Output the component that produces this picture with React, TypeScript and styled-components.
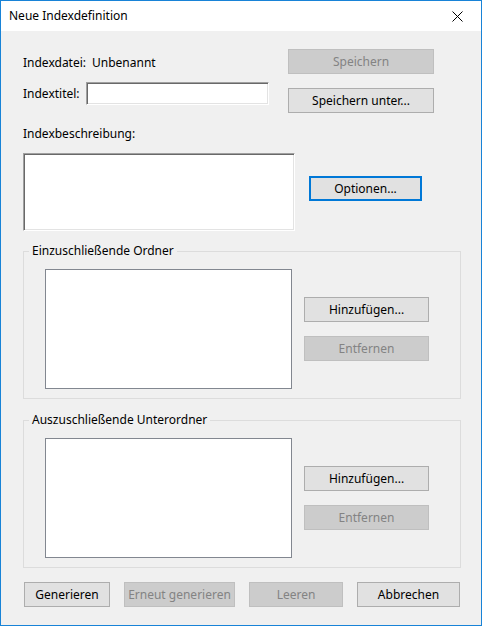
import React from "react";
import styled, { createGlobalStyle } from "styled-components";

const Global = createGlobalStyle`
  html, body { margin: 0; padding: 0; background: #ffffff; }
  * { box-sizing: border-box; }
  body {
    font-family: "Noto Sans", "Open Sans", sans-serif;
    font-size: 12px;
    color: #000;
  }
`;

const Window = styled.div`
  width: 482px;
  height: 626px;
  border: 1px solid #1883d7;
  background: #f0f0f0;
  display: flex;
  flex-direction: column;
`;

const TitleBar = styled.div`
  height: 30px;
  flex: none;
  background: #ffffff;
  display: flex;
  align-items: center;
  padding-left: 8px;
`;

const TitleText = styled.div`
  flex: 1;
  font-size: 12px;
  line-height: 16px;
  color: #000;
`;

const CloseButton = styled.div`
  width: 46px;
  height: 30px;
  display: flex;
  align-items: center;
  justify-content: center;
  padding-right: 2px;
`;

const Body = styled.div`
  flex: 1;
  padding: 18px 20px 0 22px;
  display: flex;
  flex-direction: column;
`;

const TopGrid = styled.div`
  display: grid;
  grid-template-columns: 63px 183px 165px;
  grid-template-rows: 25px 31px;
  row-gap: 8px;
`;

const InfoLine = styled.div`
  grid-column: 1 / 3;
  display: flex;
  align-items: center;
  padding-top: 2px;
  line-height: 16px;
`;

const InfoValue = styled.span`
  margin-left: 6px;
`;

const FieldLabel = styled.label`
  line-height: 23px;
  align-self: start;
  white-space: nowrap;
`;

const TextInput = styled.div`
  width: 183px;
  height: 23px;
  align-self: start;
  background: #fff;
  border: 1px solid;
  border-color: #a0a0a0 #ffffff #ffffff #a0a0a0;
  box-shadow: inset 1px 1px 0 #696969, inset -1px -1px 0 #e3e3e3;
`;

const Button = styled.div<{ $disabled?: boolean; $default?: boolean; $w: number }>`
  width: ${(p) => p.$w}px;
  height: 25px;
  display: flex;
  align-items: center;
  justify-content: center;
  line-height: 16px;
  background: ${(p) => (p.$disabled ? "#cccccc" : "#e1e1e1")};
  color: ${(p) => (p.$disabled ? "#838383" : "#000")};
  border: ${(p) =>
    p.$default ? "2px solid #0078d7" : p.$disabled ? "1px solid #bfbfbf" : "1px solid #adadad"};
  white-space: nowrap;
  flex: none;
`;

const TopButton = styled(Button)<{ $end?: boolean }>`
  align-self: ${(p) => (p.$end ? "end" : "start")};
  justify-self: end;
`;

const SectionLabel = styled.div`
  margin-top: 13px;
  line-height: 16px;
`;

const DescRow = styled.div`
  margin-top: 11px;
  display: flex;
  align-items: flex-start;
`;

const DescBox = styled.div`
  width: 272px;
  height: 78px;
  background: #fff;
  border: 1px solid;
  border-color: #a0a0a0 #ffffff #ffffff #a0a0a0;
  box-shadow: inset 1px 1px 0 #696969, inset -1px -1px 0 #e3e3e3;
`;

const OptionsButton = styled(Button)`
  margin-left: 14px;
  margin-top: 23px;
`;

const Group = styled.fieldset<{ $top: number }>`
  margin: ${(p) => p.$top}px 0 0 0;
  padding: 10px 0 9px 5px;
  border: 1px solid #dcdcdc;
  width: 438px;
  min-width: 0;
`;

const GroupTitle = styled.legend`
  padding: 0 3px;
  line-height: 16px;
  font-size: 12px;
`;

const GroupInner = styled.div`
  display: flex;
  padding-left: 16px;
`;

const ListBox = styled.div`
  width: 247px;
  height: 120px;
  background: #fff;
  border: 1px solid #828790;
`;

const SideButtons = styled.div`
  display: flex;
  flex-direction: column;
  gap: 14px;
  padding-top: 28px;
  margin-left: 12px;
`;

const Footer = styled.div`
  margin-top: 14px;
  display: flex;
  gap: 14px;
  padding-left: 1px;
`;

function CloseIcon() {
  return (
    <svg width="11" height="11" viewBox="0 0 11 11">
      <path d="M0.5 0.5 L10.5 10.5 M10.5 0.5 L0.5 10.5" stroke="#000" strokeWidth="1" fill="none" />
    </svg>
  );
}

function FolderGroup({ title, top }: { title: string; top: number }) {
  return (
    <Group $top={top}>
      <GroupTitle>{title}</GroupTitle>
      <GroupInner>
        <ListBox />
        <SideButtons>
          <Button $w={125}>Hinzufügen...</Button>
          <Button $w={125} $disabled>
            Entfernen
          </Button>
        </SideButtons>
      </GroupInner>
    </Group>
  );
}

export default function App() {
  return (
    <>
      <Global />
      <Window>
        <TitleBar>
          <TitleText>Neue Indexdefinition</TitleText>
          <CloseButton>
            <CloseIcon />
          </CloseButton>
        </TitleBar>
        <Body>
          <TopGrid>
            <InfoLine>
              Indexdatei:
              <InfoValue>Unbenannt</InfoValue>
            </InfoLine>
            <TopButton $w={146} $disabled>
              Speichern
            </TopButton>
            <FieldLabel>Indextitel:</FieldLabel>
            <TextInput />
            <TopButton $w={146} $end>
              Speichern unter...
            </TopButton>
          </TopGrid>
          <SectionLabel>Indexbeschreibung:</SectionLabel>
          <DescRow>
            <DescBox />
            <OptionsButton $w={113} $default>
              Optionen...
            </OptionsButton>
          </DescRow>
          <FolderGroup title="Einzuschließende Ordner" top={12} />
          <FolderGroup title="Auszuschließende Unterordner" top={13} />
          <Footer>
            <Button $w={86}>Generieren</Button>
            <Button $w={111} $disabled>
              Erneut generieren
            </Button>
            <Button $w={94} $disabled>
              Leeren
            </Button>
            <Button $w={103}>Abbrechen</Button>
          </Footer>
        </Body>
      </Window>
    </>
  );
}
